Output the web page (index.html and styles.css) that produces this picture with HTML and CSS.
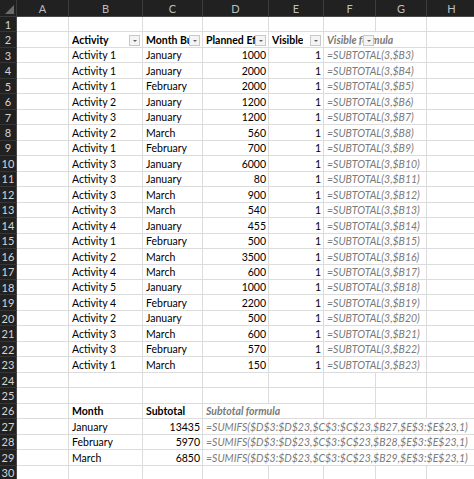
FILE: index.html
```html
<!DOCTYPE html>
<html>
<head>
<meta charset="utf-8">
<link rel="stylesheet" href="styles.css">
</head>
<body>
<div class="sheet">
  <div class="row head">
    <div class="corner"><span class="tri"></span></div>
    <div class="ch">A</div><div class="ch">B</div><div class="ch">C</div><div class="ch">D</div><div class="ch">E</div><div class="ch">F</div><div class="ch">G</div><div class="ch">H</div>
  </div>

  <div class="row"><div class="rn">1</div><div class="c"></div><div class="c"></div><div class="c"></div><div class="c"></div><div class="c"></div><div class="c"></div><div class="c"></div><div class="c"></div></div>

  <div class="row"><div class="rn">2</div><div class="c"></div>
    <div class="c b filt"><span class="t">Activity</span><span class="fb"></span></div>
    <div class="c b filt"><span class="t">Month Budget</span><span class="fb"></span></div>
    <div class="c b filt"><span class="t">Planned Effort</span><span class="fb"></span></div>
    <div class="c b filt"><span class="t">Visible</span><span class="fb"></span></div>
    <div class="c b f filt s2"><span class="t">Visible formula</span><span class="fb fbf"></span></div>
    <div class="c"></div></div>

  <div class="row"><div class="rn">3</div><div class="c"></div><div class="c">Activity 1</div><div class="c">January</div><div class="c n">1000</div><div class="c n">1</div><div class="c f s2">=SUBTOTAL(3,$B3)</div><div class="c"></div></div>
  <div class="row"><div class="rn">4</div><div class="c"></div><div class="c">Activity 1</div><div class="c">January</div><div class="c n">2000</div><div class="c n">1</div><div class="c f s2">=SUBTOTAL(3,$B4)</div><div class="c"></div></div>
  <div class="row"><div class="rn">5</div><div class="c"></div><div class="c">Activity 1</div><div class="c">February</div><div class="c n">2000</div><div class="c n">1</div><div class="c f s2">=SUBTOTAL(3,$B5)</div><div class="c"></div></div>
  <div class="row"><div class="rn">6</div><div class="c"></div><div class="c">Activity 2</div><div class="c">January</div><div class="c n">1200</div><div class="c n">1</div><div class="c f s2">=SUBTOTAL(3,$B6)</div><div class="c"></div></div>
  <div class="row"><div class="rn">7</div><div class="c"></div><div class="c">Activity 3</div><div class="c">January</div><div class="c n">1200</div><div class="c n">1</div><div class="c f s2">=SUBTOTAL(3,$B7)</div><div class="c"></div></div>
  <div class="row"><div class="rn">8</div><div class="c"></div><div class="c">Activity 2</div><div class="c">March</div><div class="c n">560</div><div class="c n">1</div><div class="c f s2">=SUBTOTAL(3,$B8)</div><div class="c"></div></div>
  <div class="row"><div class="rn">9</div><div class="c"></div><div class="c">Activity 1</div><div class="c">February</div><div class="c n">700</div><div class="c n">1</div><div class="c f s2">=SUBTOTAL(3,$B9)</div><div class="c"></div></div>
  <div class="row"><div class="rn">10</div><div class="c"></div><div class="c">Activity 3</div><div class="c">January</div><div class="c n">6000</div><div class="c n">1</div><div class="c f s2">=SUBTOTAL(3,$B10)</div><div class="c"></div></div>
  <div class="row"><div class="rn">11</div><div class="c"></div><div class="c">Activity 3</div><div class="c">January</div><div class="c n">80</div><div class="c n">1</div><div class="c f s2">=SUBTOTAL(3,$B11)</div><div class="c"></div></div>
  <div class="row"><div class="rn">12</div><div class="c"></div><div class="c">Activity 3</div><div class="c">March</div><div class="c n">900</div><div class="c n">1</div><div class="c f s2">=SUBTOTAL(3,$B12)</div><div class="c"></div></div>
  <div class="row"><div class="rn">13</div><div class="c"></div><div class="c">Activity 3</div><div class="c">March</div><div class="c n">540</div><div class="c n">1</div><div class="c f s2">=SUBTOTAL(3,$B13)</div><div class="c"></div></div>
  <div class="row"><div class="rn">14</div><div class="c"></div><div class="c">Activity 4</div><div class="c">January</div><div class="c n">455</div><div class="c n">1</div><div class="c f s2">=SUBTOTAL(3,$B14)</div><div class="c"></div></div>
  <div class="row"><div class="rn">15</div><div class="c"></div><div class="c">Activity 1</div><div class="c">February</div><div class="c n">500</div><div class="c n">1</div><div class="c f s2">=SUBTOTAL(3,$B15)</div><div class="c"></div></div>
  <div class="row"><div class="rn">16</div><div class="c"></div><div class="c">Activity 2</div><div class="c">March</div><div class="c n">3500</div><div class="c n">1</div><div class="c f s2">=SUBTOTAL(3,$B16)</div><div class="c"></div></div>
  <div class="row"><div class="rn">17</div><div class="c"></div><div class="c">Activity 4</div><div class="c">March</div><div class="c n">600</div><div class="c n">1</div><div class="c f s2">=SUBTOTAL(3,$B17)</div><div class="c"></div></div>
  <div class="row"><div class="rn">18</div><div class="c"></div><div class="c">Activity 5</div><div class="c">January</div><div class="c n">1000</div><div class="c n">1</div><div class="c f s2">=SUBTOTAL(3,$B18)</div><div class="c"></div></div>
  <div class="row"><div class="rn">19</div><div class="c"></div><div class="c">Activity 4</div><div class="c">February</div><div class="c n">2200</div><div class="c n">1</div><div class="c f s2">=SUBTOTAL(3,$B19)</div><div class="c"></div></div>
  <div class="row"><div class="rn">20</div><div class="c"></div><div class="c">Activity 2</div><div class="c">January</div><div class="c n">500</div><div class="c n">1</div><div class="c f s2">=SUBTOTAL(3,$B20)</div><div class="c"></div></div>
  <div class="row"><div class="rn">21</div><div class="c"></div><div class="c">Activity 3</div><div class="c">March</div><div class="c n">600</div><div class="c n">1</div><div class="c f s2">=SUBTOTAL(3,$B21)</div><div class="c"></div></div>
  <div class="row"><div class="rn">22</div><div class="c"></div><div class="c">Activity 3</div><div class="c">February</div><div class="c n">570</div><div class="c n">1</div><div class="c f s2">=SUBTOTAL(3,$B22)</div><div class="c"></div></div>
  <div class="row"><div class="rn">23</div><div class="c"></div><div class="c">Activity 1</div><div class="c">March</div><div class="c n">150</div><div class="c n">1</div><div class="c f s2">=SUBTOTAL(3,$B23)</div><div class="c"></div></div>

  <div class="row"><div class="rn">24</div><div class="c"></div><div class="c"></div><div class="c"></div><div class="c"></div><div class="c"></div><div class="c"></div><div class="c"></div><div class="c"></div></div>
  <div class="row"><div class="rn">25</div><div class="c"></div><div class="c"></div><div class="c"></div><div class="c"></div><div class="c"></div><div class="c"></div><div class="c"></div><div class="c"></div></div>

  <div class="row"><div class="rn">26</div><div class="c"></div><div class="c b">Month</div><div class="c b">Subtotal</div><div class="c b f s2">Subtotal formula</div><div class="c"></div><div class="c"></div><div class="c"></div></div>
  <div class="row"><div class="rn">27</div><div class="c"></div><div class="c">January</div><div class="c n">13435</div><div class="c f s5">=SUMIFS($D$3:$D$23,$C$3:$C$23,$B27,$E$3:$E$23,1)</div></div>
  <div class="row"><div class="rn">28</div><div class="c"></div><div class="c">February</div><div class="c n">5970</div><div class="c f s5">=SUMIFS($D$3:$D$23,$C$3:$C$23,$B28,$E$3:$E$23,1)</div></div>
  <div class="row"><div class="rn">29</div><div class="c"></div><div class="c">March</div><div class="c n">6850</div><div class="c f s5">=SUMIFS($D$3:$D$23,$C$3:$C$23,$B29,$E$3:$E$23,1)</div></div>
  <div class="row"><div class="rn">30</div><div class="c"></div><div class="c"></div><div class="c"></div><div class="c"></div><div class="c"></div><div class="c"></div><div class="c"></div><div class="c"></div></div>
</div>
</body>
</html>
```

FILE: styles.css
```css
html, body {
  margin: 0;
  padding: 0;
  background: #ffffff;
  overflow: hidden;
}

.sheet {
  width: 477px;
  font-family: Lato, "Liberation Sans", sans-serif;
  font-size: 10.5px;
  color: #000;
}

.row {
  display: grid;
  grid-template-columns: 17px 52px 74px 60px 66px 55px 52px 51px 50px;
  height: 15.47px;
}

.row.head {
  height: 17px;
  background: #212121;
}

.corner {
  position: relative;
  border-right: 1px solid #3a3a3a;
  border-bottom: 1px solid #3a3a3a;
  box-sizing: border-box;
}

.tri {
  position: absolute;
  right: 2px;
  bottom: 2px;
  width: 0;
  height: 0;
  border-left: 9px solid transparent;
  border-bottom: 9px solid #6b6b6b;
}

.ch {
  display: flex;
  align-items: center;
  justify-content: center;
  color: #bfbfbf;
  font-size: 11px;
  border-right: 1px solid #3d3d3d;
  border-bottom: 1px solid #4a4a4a;
  box-sizing: border-box;
}

.rn {
  background: #212121;
  color: #d4d4d4;
  font-size: 11px;
  display: flex;
  align-items: center;
  justify-content: center;
  border-bottom: 1px solid #363636;
  border-right: 1px solid #4a4a4a;
  box-sizing: border-box;
  line-height: 1;
}

.c {
  box-sizing: border-box;
  border-right: 1px solid #dcdcdc;
  border-bottom: 1px solid #dcdcdc;
  padding: 0 2px 0 3px;
  display: flex;
  align-items: flex-end;
  line-height: 14px;
  white-space: nowrap;
  min-width: 0;
}

.c.n {
  justify-content: flex-end;
}

.c.b {
  font-weight: bold;
}

.c.f {
  font-style: italic;
  color: #7a7a7a;
}

.s2 { grid-column: span 2; }
.s5 { grid-column: span 5; }

.filt {
  position: relative;
  overflow: hidden;
}

.filt .t {
  overflow: hidden;
}

.fb {
  position: absolute;
  right: 2px;
  top: 3px;
  width: 11px;
  height: 11px;
  box-sizing: border-box;
  border: 1px solid #c8c8c8;
  background: #f4f4f4;
}

.fb::after {
  content: "";
  position: absolute;
  left: 3px;
  top: 4px;
  border-left: 2px solid transparent;
  border-right: 2px solid transparent;
  border-top: 2px solid #606060;
}

.fb.fbf {
  right: auto;
  left: 39px;
}
```
